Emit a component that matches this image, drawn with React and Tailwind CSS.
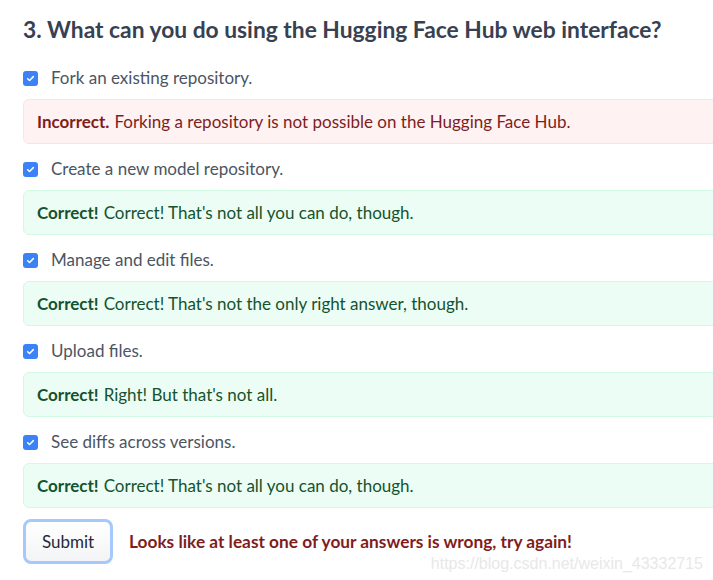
const items = [
  {
    label: "Fork an existing repository.",
    ok: false,
    head: "Incorrect.",
    text: "Forking a repository is not possible on the Hugging Face Hub.",
  },
  {
    label: "Create a new model repository.",
    ok: true,
    head: "Correct!",
    text: "Correct! That's not all you can do, though.",
  },
  {
    label: "Manage and edit files.",
    ok: true,
    head: "Correct!",
    text: "Correct! That's not the only right answer, though.",
  },
  { label: "Upload files.", ok: true, head: "Correct!", text: "Right! But that's not all." },
  {
    label: "See diffs across versions.",
    ok: true,
    head: "Correct!",
    text: "Correct! That's not all you can do, though.",
  },
];

function Check() {
  return (
    <span className="flex h-[15px] w-[15px] items-center justify-center rounded-[3px] bg-[#3b82f6]">
      <svg width="9" height="9" viewBox="0 0 12 12" fill="none">
        <path d="M2.2 6.3l2.5 2.4 5.1-5.2" stroke="white" strokeWidth="2" strokeLinecap="round" strokeLinejoin="round" />
      </svg>
    </span>
  );
}

export default function App() {
  return (
    <div className="relative h-[580px] w-[713px] overflow-hidden bg-white pl-[23px] font-['Lato',sans-serif]">
      <h2 className="pt-[14px] text-[22.8px] font-bold leading-[30px] text-[#374151]">
        3. What can you do using the Hugging Face Hub web interface?
      </h2>

      <div className="mt-[22px] flex flex-col gap-[13px]">
        {items.map((item) => (
          <div key={item.label}>
            <label className="flex h-6 items-center gap-[13px] text-[17px] text-[#4b5563]">
              <Check />
              {item.label}
            </label>
            <div
              className={`-mr-4 mt-[9px] flex h-[45px] items-center rounded-l-[6px] border px-[13px] text-[17px] ${
                item.ok
                  ? "border-[#d1fae5] bg-[#ecfdf5] text-[#14532d]"
                  : "border-[#fee2e2] bg-[#fef2f2] text-[#7f1d1d]"
              }`}
            >
              <span className="font-bold">{item.head}</span>
              <span className="ml-[5px]">{item.text}</span>
            </div>
          </div>
        ))}
      </div>

      <div className="mt-[11px] flex items-center gap-4">
        <button className="h-[45px] w-[90px] rounded-[8px] border-[3px] border-[#a5c8fd] bg-gradient-to-b from-white to-[#f3f4f6] text-[17px] text-[#1f2937]">
          Submit
        </button>
        <span className="text-[17.3px] font-bold text-[#7f1d1d]">
          Looks like at least one of your answers is wrong, try again!
        </span>
      </div>

      <div className="absolute bottom-[4px] right-[10px] font-['Liberation_Sans',sans-serif] text-[16px] text-[#e8e8e8]">
        https://blog.csdn.net/weixin_43332715
      </div>
    </div>
  );
}
